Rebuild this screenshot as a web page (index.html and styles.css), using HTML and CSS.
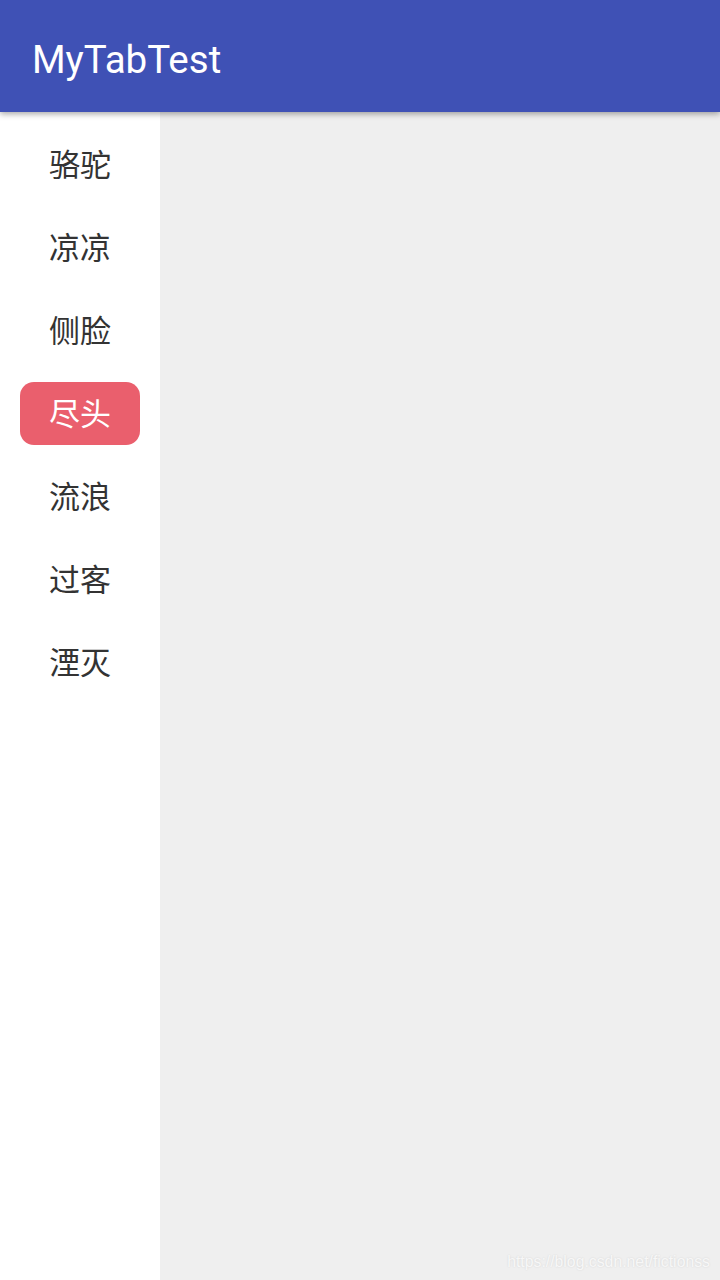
FILE: index.html
```html
<!DOCTYPE html>
<html lang="zh">
<head>
<meta charset="utf-8">
<link rel="stylesheet" href="styles.css">
</head>
<body>
<div class="app">
  <header class="toolbar"><span class="title">MyTabTest</span></header>
  <div class="main">
    <nav class="tabs">
      <div class="tab">骆驼</div>
      <div class="tab">凉凉</div>
      <div class="tab">侧脸</div>
      <div class="tab active">尽头</div>
      <div class="tab">流浪</div>
      <div class="tab">过客</div>
      <div class="tab">湮灭</div>
    </nav>
    <section class="content">
      <span class="watermark">https://blog.csdn.net/fictionss</span>
    </section>
  </div>
</div>
</body>
</html>
```
FILE: styles.css
```css
html, body {
  margin: 0;
  padding: 0;
  height: 100%;
}
body {
  font-family: Roboto, "Noto Sans CJK SC", sans-serif;
  background: #efefef;
}
.app {
  display: flex;
  flex-direction: column;
  height: 1280px;
}
.toolbar {
  height: 112px;
  background: #3f51b5;
  display: flex;
  align-items: center;
  padding-left: 32px;
  padding-top: 6px;
  box-sizing: border-box;
  box-shadow: 0 2px 6px rgba(0,0,0,0.35);
  position: relative;
  z-index: 2;
  flex: none;
}
.title {
  color: #fff;
  font-size: 38.5px;
  font-family: Roboto, sans-serif;
}
.main {
  flex: 1;
  display: flex;
}
.tabs {
  width: 160px;
  background: #fff;
  display: flex;
  flex-direction: column;
  gap: 20px;
  padding-top: 21px;
  box-sizing: border-box;
}
.tab {
  height: 63px;
  margin: 0 20px;
  display: flex;
  align-items: center;
  justify-content: center;
  padding-bottom: 4px;
  box-sizing: border-box;
  font-family: "Noto Sans CJK SC", sans-serif;
  font-size: 31px;
  color: #333;
  border-radius: 14px;
}
.tab.active {
  background: #ea5f6d;
  color: #fff;
}
.content {
  flex: 1;
  background: #efefef;
  display: flex;
  align-items: flex-end;
  justify-content: flex-end;
  padding: 0 10px 9px 0;
}
.watermark {
  font-family: "Liberation Sans", sans-serif;
  font-size: 15.8px;
  color: #f7f7f7;
  text-shadow: 0 0 2px rgba(0,0,0,0.12);
}
```
